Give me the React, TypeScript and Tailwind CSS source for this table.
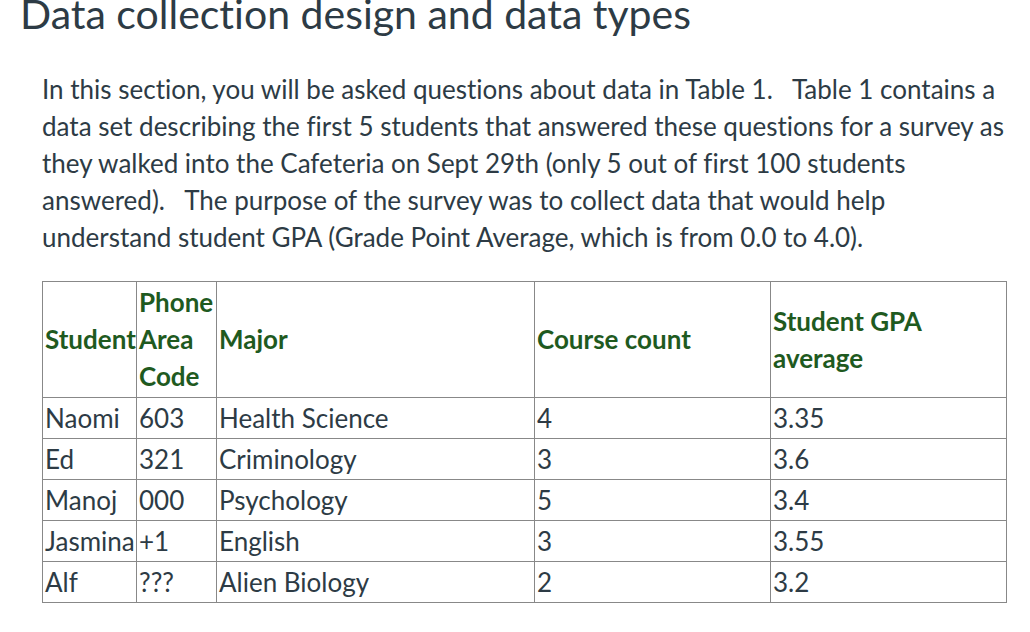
import React from 'react'

const rows = [
    ['Naomi', '603', 'Health Science', '4', '3.35'],
    ['Ed', '321', 'Criminology', '3', '3.6'],
    ['Manoj', '000', 'Psychology', '5', '3.4'],
    ['Jasmina', '+1', 'English', '3', '3.55'],
    ['Alf', '???', 'Alien Biology', '2', '3.2'],
]

const App = () => {
    return (
        <div className="bg-white w-[1030px] h-[632px] overflow-hidden text-[#2d3b45] font-['Lato',sans-serif] [font-variant-ligatures:none]">
            <h1 className="text-[41px] leading-[40px] mt-[-6px] ml-[20px] font-normal">Data collection design and data types</h1>
            <p className="ml-[42px] w-[965px] mt-[37px] text-[26px] leading-[37px]">
                In this section, you will be asked questions about data in Table 1. &nbsp; Table 1 contains a data set describing the first 5 students that answered these questions for a survey as they walked into the Cafeteria on Sept 29th (only 5 out of first 100 students answered). &nbsp; The purpose of the survey was to collect data that would help understand student GPA (Grade Point Average, which is from 0.0 to 4.0).
            </p>
            <table className="ml-[42px] mt-[25px] w-[964px] table-fixed border-collapse text-[26px] leading-[37px]">
                <colgroup>
                    <col className="w-[94px]" />
                    <col className="w-[80px]" />
                    <col className="w-[318px]" />
                    <col className="w-[236px]" />
                    <col className="w-[236px]" />
                </colgroup>
                <thead>
                    <tr className="text-[#1f5a1f] font-bold">
                        <th className="border border-[#888] px-[2px] py-[2px] text-left align-middle">Student</th>
                        <th className="border border-[#888] px-[2px] py-[2px] text-left align-middle">Phone Area Code</th>
                        <th className="border border-[#888] px-[2px] py-[2px] text-left align-middle">Major</th>
                        <th className="border border-[#888] px-[2px] py-[2px] text-left align-middle">Course count</th>
                        <th className="border border-[#888] px-[2px] py-[2px] text-left align-middle">Student GPA average</th>
                    </tr>
                </thead>
                <tbody>
                    {rows.map((r) => (
                        <tr key={r[0]}>
                            {r.map((c, i) => (
                                <td key={i} className="border border-[#888] px-[2px] py-[1.5px] whitespace-nowrap">{c}</td>
                            ))}
                        </tr>
                    ))}
                </tbody>
            </table>
        </div>
    )
}

export default App
